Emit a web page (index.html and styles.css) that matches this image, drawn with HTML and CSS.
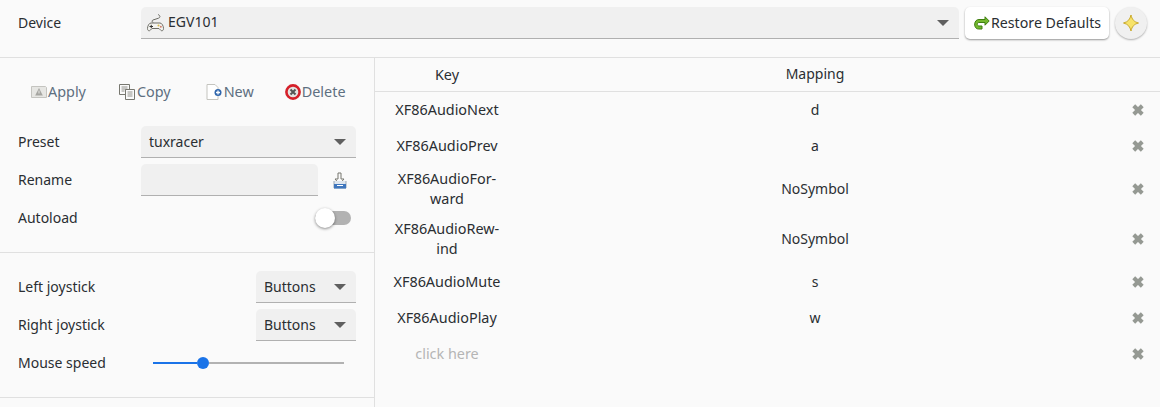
FILE: index.html
```html
<!DOCTYPE html>
<html lang="en">
<head>
  <meta charset="UTF-8"/>
  <title>Gamepad mapper</title>
  <link rel="stylesheet" href="styles.css">
</head>
<body>

<div class="topbar">
  <div class="label device-label">Device</div>
  <div class="combo device-combo">
    <svg class="pad-icon" width="17" height="18" viewBox="0 0 17 18" fill="none" stroke="#6d6d66" stroke-width="1">
      <path d="M11 .5c2.500 1 2.500 3 .5 3.700L6 6c-1.500.6-1 2 .5 3"/>
      <path d="M4 9h9c1.900 0 3.500 3 3.500 5.500 0 2.500-2 2.800-3 1.500L12 14.500H5L3.500 16c-1 1.300-3 1-3-1.500C.5 12 2.100 9 4 9z" fill="#f4f4f0"/>
      <path d="M2.500 12.500h3.500M4.250 10.800v3.400" stroke="#333"/>
      <circle cx="11.500" cy="11.500" r="1" fill="#d8b84a" stroke="none"/>
      <circle cx="13.800" cy="12.800" r="1" fill="#cf7f70" stroke="none"/>
    </svg>
    <span class="combo-text">EGV101</span>
    <span class="arrow"></span>
  </div>
  <button class="restore">
    <svg width="17" height="14" viewBox="0 0 17 14" fill="none">
      <path d="M6 3.500h6V.8l4.200 4.200L12 9.200V6.500H6c-2.300 0-2.300 3.500 0 3.500h3v3H5.500C.3 13 .3 3.500 6 3.500z" fill="#73b82e" stroke="#3f7f10" stroke-width="1"/>
    </svg>
    <span class="txt">Restore Defaults</span>
  </button>
  <button class="star">
    <svg width="18" height="18" viewBox="0 0 18 18">
      <path d="M9 1c1 4.500 3 6.800 7.500 8-4.500 1.200-6.500 3.500-7.500 8-1-4.500-3-6.800-7.500-8C6 7.800 8 5.500 9 1z" fill="#f7e36a" stroke="#c9a92a" stroke-width="1"/>
    </svg>
  </button>
</div>

<div class="main">
  <div class="left">
    <div class="section first">
      <div class="toolbar">
        <div class="tool tool-apply">
          <svg width="16" height="14" viewBox="0 0 16 14">
            <path d="M.5 1.500h14l1 1v10h-15z" fill="#e6e6e3" stroke="#c4c4c0"/>
            <path d="M8 3l3.800 7.500H4.200z" fill="#a5a5a1"/>
            <path d="M8 5.500v3" stroke="#e6e6e3"/>
          </svg>
          <span>Apply</span>
        </div>
        <div class="tool tool-copy">
          <svg width="17" height="16" viewBox="0 0 17 16" fill="#fafafa" stroke="#77776f">
            <path d="M.5.5h10v10H.5z"/>
            <path d="M6.500 5.500h9v10h-9z"/>
            <path d="M2.500 3h6M2.500 5h6M2.500 7h3M8.500 8h5M8.500 10h5M8.500 12h5" stroke-width=".8"/>
          </svg>
          <span>Copy</span>
        </div>
        <div class="tool tool-new">
          <svg width="17" height="16" viewBox="0 0 17 16">
            <path d="M1 .5h8l3 3v12H1z" fill="#fff" stroke="#c4c4bf"/>
            <circle cx="12" cy="8.500" r="3.500" fill="#2f66ad"/>
            <path d="M10 8.500h4M12 6.500v4" stroke="#fff" stroke-width="1.300"/>
          </svg>
          <span>New</span>
        </div>
        <div class="tool tool-delete">
          <svg width="16" height="16" viewBox="0 0 16 16">
            <circle cx="8" cy="8" r="6.600" fill="#e4e4e1" stroke="#d5202a" stroke-width="2.600"/>
            <path d="M5.500 5.500l5 5M10.500 5.500l-5 5" stroke="#555" stroke-width="2"/>
          </svg>
          <span>Delete</span>
        </div>
      </div>

      <div class="row">
        <div class="label">Preset</div>
        <div class="combo preset-combo"><span class="combo-text">tuxracer</span><span class="arrow"></span></div>
      </div>
      <div class="row">
        <div class="label">Rename</div>
        <div class="entry"></div>
        <svg class="save-icon" width="14" height="17" viewBox="0 0 14 17" fill="none">
          <path d="M5 1h3v6h3L6.500 12 2 7h3z" fill="#fafafa" stroke="#77776f"/>
          <path d="M1 9v7h12V9" fill="#dfe6ee" stroke="#9aa7b5"/>
          <path d="M1 12h12v4.500H1z" fill="#3f76bd"/>
          <path d="M4 13.500h6" stroke="#fff"/>
        </svg>
      </div>
      <div class="row row-autoload">
        <div class="label">Autoload</div>
        <div class="switch"><span class="knob"></span></div>
      </div>
    </div>

    <div class="section">
      <div class="row">
        <div class="label">Left joystick</div>
        <div class="combo small-combo"><span class="combo-text">Buttons</span><span class="arrow"></span></div>
      </div>
      <div class="row">
        <div class="label">Right joystick</div>
        <div class="combo small-combo"><span class="combo-text">Buttons</span><span class="arrow"></span></div>
      </div>
      <div class="row row-speed">
        <div class="label">Mouse speed</div>
        <div class="slider">
          <span class="slider-fill"></span>
          <span class="slider-thumb"></span>
          <span class="slider-rest"></span>
        </div>
      </div>
    </div>
  </div>

  <div class="right">
    <div class="thead">
      <div class="key">Key</div>
      <div class="mapping">Mapping</div>
    </div>
    <div class="trow"><div class="key">XF86AudioNext</div><div class="mapping">d</div><div class="del"></div></div>
    <div class="trow"><div class="key">XF86AudioPrev</div><div class="mapping">a</div><div class="del"></div></div>
    <div class="trow tall"><div class="key">XF86AudioFor-<br>ward</div><div class="mapping">NoSymbol</div><div class="del"></div></div>
    <div class="trow tall"><div class="key">XF86AudioRew-<br>ind</div><div class="mapping">NoSymbol</div><div class="del"></div></div>
    <div class="trow"><div class="key">XF86AudioMute</div><div class="mapping">s</div><div class="del"></div></div>
    <div class="trow"><div class="key">XF86AudioPlay</div><div class="mapping">w</div><div class="del"></div></div>
    <div class="trow"><div class="key hint">click here</div><div class="mapping"></div><div class="del"></div></div>
  </div>
</div>

</body>
</html>
```

FILE: styles.css
```css
:root {
  --fondo: #fafafa;
  --linea: #e0e0e0;
  --campo: #f0f0f0;
  --texto: #2a2e32;
  --azul: #1a73e8;
}
* {
  margin: 0; padding: 0; box-sizing: border-box;
}
body {
  width: 1160px;
  height: 407px;
  overflow: hidden;
  background: var(--fondo);
  color: var(--texto);
  font-family: "Noto Sans", sans-serif;
  font-size: 14px;
}
.topbar {
  display: flex;
  align-items: center;
  height: 58px;
  padding: 0 13px 11px 18px;
  border-bottom: 1px solid var(--linea);
}
.label {
  width: 123px;
  flex: none;
  padding-bottom: 2px;
}
.combo {
  display: flex;
  align-items: center;
  height: 32px;
  padding: 0 8px;
  background: var(--campo);
  border-bottom: 1px solid #b0b0b0;
  border-radius: 5px 5px 0 0;
}
.combo-text {
  flex: 1;
  padding-bottom: 1px;
}
.device-combo {
  width: 818px;
  padding-left: 6px;
}
.device-combo .combo-text {
  padding-bottom: 2px;
}
.pad-icon {
  margin-right: 4px;
  margin-top: 1px;
}
.arrow {
  width: 0;
  height: 0;
  margin-right: 2px;
  border-left: 6px solid transparent;
  border-right: 6px solid transparent;
  border-top: 6px solid #5f5f5f;
}
.restore {
  display: flex;
  align-items: center;
  gap: 1px;
  width: 144px;
  height: 32px;
  margin-left: 6px;
  padding-left: 8px;
  background: #fff;
  border: none;
  border-radius: 5px;
  box-shadow: 0 1px 2px rgba(0,0,0,0.4);
  color: var(--texto);
  font: inherit;
  font-size: 14.2px;
}
.restore .txt {
  padding-bottom: 2px;
}
.star {
  display: flex;
  align-items: center;
  justify-content: center;
  width: 32px;
  height: 32px;
  margin-left: 6px;
  background: #f0f0f0;
  border: none;
  border-radius: 50%;
  box-shadow: 0 1px 2px rgba(0,0,0,0.3);
}
.main {
  display: flex;
  height: 349px;
}
.left {
  width: 375px;
  flex: none;
  border-right: 1px solid var(--linea);
}
.section {
  height: 145px;
  padding: 18px 18px 0;
  border-bottom: 1px solid var(--linea);
}
.section.first {
  height: 195px;
  padding-top: 18px;
}
.toolbar {
  display: flex;
  align-items: center;
  height: 32px;
  margin-bottom: 18px;
  color: #5e6f80;
  font-size: 14.4px;
}
.tool {
  display: flex;
  align-items: center;
  gap: 1px;
}
.tool span {
  padding-bottom: 2px;
}
.tool-apply { margin-left: 13px; }
.tool-copy { margin-left: 33px; }
.tool-new { margin-left: 35px; }
.tool-delete { margin-left: 31px; }
.row {
  display: flex;
  align-items: center;
  justify-content: space-between;
  height: 32px;
  margin-bottom: 6px;
}
.preset-combo {
  width: 215px;
}
.entry {
  width: 177px;
  height: 32px;
  margin-right: auto;
  background: var(--campo);
  border-bottom: 1px solid #b0b0b0;
  border-radius: 5px 5px 0 0;
}
.save-icon {
  margin-right: 9px;
}
.switch {
  display: flex;
  align-items: center;
  width: 36px;
  height: 14px;
  margin-right: 5px;
  background: #b2b2b2;
  border-radius: 7px;
}
.knob {
  width: 20px;
  height: 20px;
  background: #fff;
  border-radius: 50%;
  box-shadow: 0 1px 3px rgba(0,0,0,0.45);
}
.small-combo {
  width: 100px;
}
.slider {
  display: flex;
  align-items: center;
  width: 191px;
  margin-right: 12px;
  margin-left: auto;
}
.row-speed .label {
  width: 100px;
}
.slider-fill {
  width: 44px;
  height: 2px;
  background: var(--azul);
}
.slider-thumb {
  flex: none;
  width: 12px;
  height: 12px;
  background: var(--azul);
  border-radius: 50%;
}
.slider-rest {
  flex: 1;
  height: 2px;
  background: #b2b2b2;
}
.right {
  flex: 1;
}
.thead {
  display: flex;
  align-items: center;
  height: 34px;
  border-bottom: 1px solid var(--linea);
}
.trow {
  display: flex;
  align-items: center;
  height: 36px;
}
.trow.tall {
  height: 50px;
}
.key {
  width: 144px;
  flex: none;
  text-align: center;
  line-height: 20px;
  font-size: 14.4px;
}
.mapping {
  width: 592px;
  flex: none;
  text-align: center;
  padding-bottom: 2px;
}
.hint {
  color: #b5b5b5;
}
.del {
  position: relative;
  width: 12px;
  height: 12px;
  margin-left: 21px;
}
.del::before, .del::after {
  content: "";
  position: absolute;
  left: 0;
  top: 4px;
  width: 12px;
  height: 4px;
  background: #959993;
  transform: rotate(45deg);
}
.del::after {
  transform: rotate(-45deg);
}
```
